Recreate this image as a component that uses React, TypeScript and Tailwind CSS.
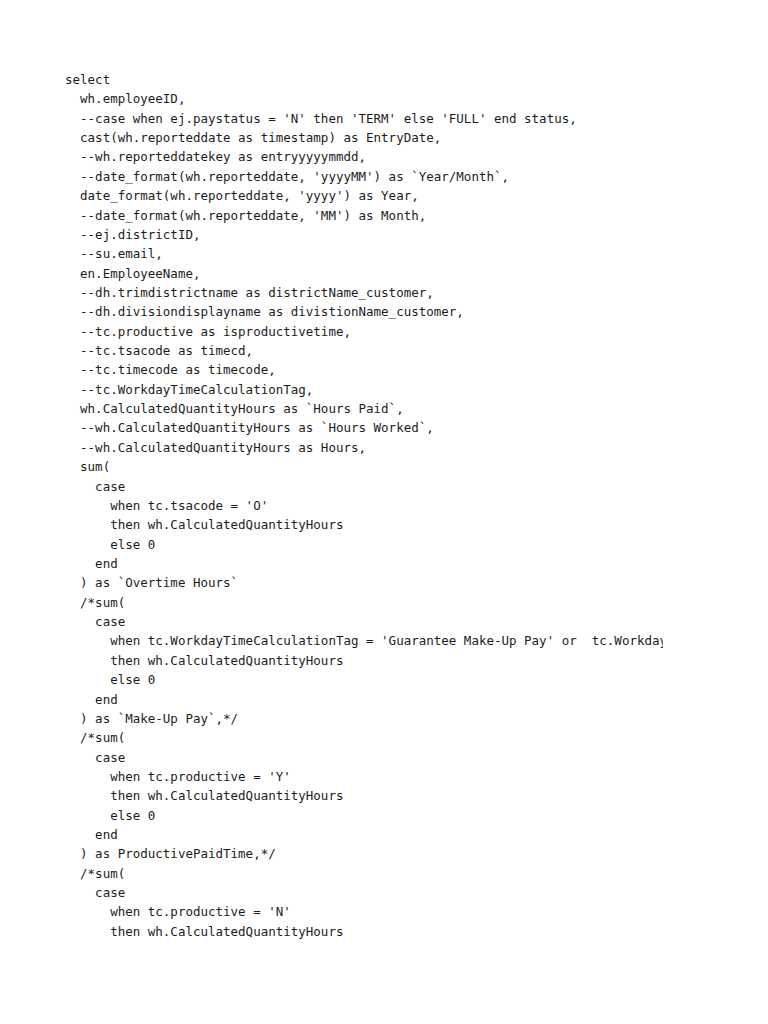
const lines: string[] = [
    "select",
    "  wh.employeeID,",
    "  --case when ej.paystatus = 'N' then 'TERM' else 'FULL' end status,",
    "  cast(wh.reporteddate as timestamp) as EntryDate,",
    "  --wh.reporteddatekey as entryyyyymmdd,",
    "  --date_format(wh.reporteddate, 'yyyyMM') as `Year/Month`,",
    "  date_format(wh.reporteddate, 'yyyy') as Year,",
    "  --date_format(wh.reporteddate, 'MM') as Month,",
    "  --ej.districtID,",
    "  --su.email,",
    "  en.EmployeeName,",
    "  --dh.trimdistrictname as districtName_customer,",
    "  --dh.divisiondisplayname as divistionName_customer,",
    "  --tc.productive as isproductivetime,",
    "  --tc.tsacode as timecd,",
    "  --tc.timecode as timecode,",
    "  --tc.WorkdayTimeCalculationTag,",
    "  wh.CalculatedQuantityHours as `Hours Paid`,",
    "  --wh.CalculatedQuantityHours as `Hours Worked`,",
    "  --wh.CalculatedQuantityHours as Hours,",
    "  sum(",
    "    case",
    "      when tc.tsacode = 'O'",
    "      then wh.CalculatedQuantityHours",
    "      else 0",
    "    end",
    "  ) as `Overtime Hours`",
    "  /*sum(",
    "    case",
    "      when tc.WorkdayTimeCalculationTag = 'Guarantee Make-Up Pay' or  tc.WorkdayTimeCalculationTag = 'Guarantee Make-Up Pay'",
    "      then wh.CalculatedQuantityHours",
    "      else 0",
    "    end",
    "  ) as `Make-Up Pay`,*/",
    "  /*sum(",
    "    case",
    "      when tc.productive = 'Y'",
    "      then wh.CalculatedQuantityHours",
    "      else 0",
    "    end",
    "  ) as ProductivePaidTime,*/",
    "  /*sum(",
    "    case",
    "      when tc.productive = 'N'",
    "      then wh.CalculatedQuantityHours",
];

export default function App() {
    return (
        <div className="w-[768px] h-[1024px] bg-white overflow-hidden">
            {/* page clips long lines at the right margin */}
            <div className="w-[663px] overflow-hidden pl-[65px] pt-[70px]">
                <pre className="font-['DejaVu_Sans_Mono',monospace] text-[12.5px] leading-[19.36px] text-[#1c1c1c] whitespace-pre">
                    {lines.join("\n")}
                </pre>
            </div>
        </div>
    );
}
